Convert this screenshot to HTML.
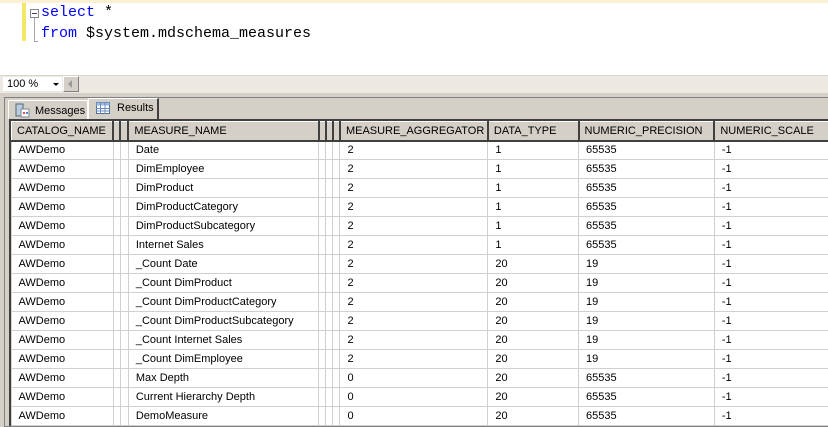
<!DOCTYPE html>
<html><head><meta charset="utf-8"><style>
*{margin:0;padding:0;box-sizing:border-box}
body{width:828px;height:424px;overflow:hidden;background:#d4d0c8;position:relative;font-family:"Liberation Sans",sans-serif}
.ed{position:absolute;left:0;top:0;width:828px;height:75px;background:#fff}
.ytop{position:absolute;left:0;top:0;width:828px;height:3px;background:#fcf1d6}
.ybar{position:absolute;left:22px;top:3px;width:4px;height:38px;background:#f4e66a}
.code{position:absolute;left:41px;font:15px "Liberation Mono",monospace;color:#000;white-space:pre}
.kw{color:#0000ff}
.fold{position:absolute;left:30px;top:9px;width:9px;height:9px;border:1px solid #888;background:#fff}
.fold:after{content:"";position:absolute;left:1px;top:3px;width:5px;height:1px;background:#444}
.fl{position:absolute;left:34px;top:18px;width:1px;height:24px;background:#aaa}
.fl2{position:absolute;left:34px;top:41px;width:4px;height:1px;background:#aaa}
.zb{position:absolute;left:0;top:75px;width:828px;height:18px;background:#ece9e2;border-top:1px solid #d8d5cc}
.zs{position:absolute;left:3px;top:77px;width:59px;height:14px;background:#fff;font-size:11px;padding-left:4px;line-height:14px}
.za{position:absolute;left:53px;top:83px;border:3px solid transparent;border-top:3px solid #000}
.zbtn{position:absolute;left:63px;top:76px;width:16px;height:16px;background:#d4d0c8;border:1px solid #fff;border-right-color:#808080;border-bottom-color:#808080}
.zbtn:after{content:"";position:absolute;left:4px;top:3px;border:4px solid transparent;border-right:4px solid #999;border-left:0}
.pane{position:absolute;left:4px;top:97px;width:830px;height:330px;border:1px solid #808080;border-right:0;background:#d4d0c8}
.tab{position:absolute;font-size:11px;height:19px;line-height:18px;background:#d4d0c8;border:1px solid #fff;border-bottom:0}
.grid{position:absolute;left:9px;top:119px;width:830px;border-left:2px solid #404040;border-top:2px solid #404040}
table{border-collapse:collapse;table-layout:fixed;font-size:11px}
th{height:19px;font-weight:normal;text-align:left;padding-left:5px;background:#d4d0c8;border-top:1px solid #fff;border-left:1px solid #fff;border-right:2px solid #404040;border-bottom:2px solid #404040;white-space:nowrap;overflow:hidden}
td{height:19px;background:#fff;border-right:1px solid #d0d0d0;border-bottom:1px solid #d0d0d0;padding-left:7px;white-space:nowrap;overflow:hidden}
td.s{background:#fff;padding:0}
</style></head><body>
<div class="ed"></div><div class="ytop"></div>
<div class="ybar"></div>
<div class="fold"></div><div class="fl"></div><div class="fl2"></div>
<div class="code" style="top:4px"><span class="kw">select</span> *</div>
<div class="code" style="top:25px"><span class="kw">from</span> $system.mdschema_measures</div>
<div class="zb"></div>
<div class="zs">100 %</div><div class="za"></div><div class="zbtn"></div>
<div class="pane"></div>
<div class="tab" style="left:8px;top:100px;width:80px;padding-left:26px;line-height:20px">Messages
<svg style="position:absolute;left:6px;top:2px" width="15" height="15"><rect x="1" y="1" width="7" height="12" fill="#bcd" stroke="#567"/><rect x="6" y="6" width="8" height="8" fill="#fff" stroke="#789"/><rect x="8" y="9" width="2" height="2" fill="#e44"/><rect x="11" y="9" width="2" height="2" fill="#48c"/></svg></div>
<div class="tab" style="left:88px;top:98px;width:71px;height:21px;padding-left:28px;border-right:2px solid #404040">Results
<svg style="position:absolute;left:7px;top:3px" width="14" height="12"><rect x="0.5" y="0.5" width="13" height="11" fill="#fff" stroke="#4a6fa5"/><rect x="0.5" y="0.5" width="13" height="3" fill="#9bb8e0"/><path d="M0 6.5H14M0 9H14M4.5 0V12M9 0V12" stroke="#6a8cc0"/></svg></div>
<div class="grid"><table>
<colgroup><col style="width:102px"><col style="width:7px"><col style="width:8px"><col style="width:191px"><col style="width:7px"><col style="width:7px"><col style="width:7px"><col style="width:148px"><col style="width:91px"><col style="width:136px"><col style="width:124px"></colgroup>
<tr><th>CATALOG_NAME</th><th></th><th></th><th>MEASURE_NAME</th><th></th><th></th><th></th><th>MEASURE_AGGREGATOR</th><th>DATA_TYPE</th><th>NUMERIC_PRECISION</th><th>NUMERIC_SCALE</th></tr>
<tr><td>AWDemo</td><td class="s"></td><td class="s"></td><td>Date</td><td class="s"></td><td class="s"></td><td class="s"></td><td>2</td><td>1</td><td>65535</td><td>-1</td></tr>
<tr><td>AWDemo</td><td class="s"></td><td class="s"></td><td>DimEmployee</td><td class="s"></td><td class="s"></td><td class="s"></td><td>2</td><td>1</td><td>65535</td><td>-1</td></tr>
<tr><td>AWDemo</td><td class="s"></td><td class="s"></td><td>DimProduct</td><td class="s"></td><td class="s"></td><td class="s"></td><td>2</td><td>1</td><td>65535</td><td>-1</td></tr>
<tr><td>AWDemo</td><td class="s"></td><td class="s"></td><td>DimProductCategory</td><td class="s"></td><td class="s"></td><td class="s"></td><td>2</td><td>1</td><td>65535</td><td>-1</td></tr>
<tr><td>AWDemo</td><td class="s"></td><td class="s"></td><td>DimProductSubcategory</td><td class="s"></td><td class="s"></td><td class="s"></td><td>2</td><td>1</td><td>65535</td><td>-1</td></tr>
<tr><td>AWDemo</td><td class="s"></td><td class="s"></td><td>Internet Sales</td><td class="s"></td><td class="s"></td><td class="s"></td><td>2</td><td>1</td><td>65535</td><td>-1</td></tr>
<tr><td>AWDemo</td><td class="s"></td><td class="s"></td><td>_Count Date</td><td class="s"></td><td class="s"></td><td class="s"></td><td>2</td><td>20</td><td>19</td><td>-1</td></tr>
<tr><td>AWDemo</td><td class="s"></td><td class="s"></td><td>_Count DimProduct</td><td class="s"></td><td class="s"></td><td class="s"></td><td>2</td><td>20</td><td>19</td><td>-1</td></tr>
<tr><td>AWDemo</td><td class="s"></td><td class="s"></td><td>_Count DimProductCategory</td><td class="s"></td><td class="s"></td><td class="s"></td><td>2</td><td>20</td><td>19</td><td>-1</td></tr>
<tr><td>AWDemo</td><td class="s"></td><td class="s"></td><td>_Count DimProductSubcategory</td><td class="s"></td><td class="s"></td><td class="s"></td><td>2</td><td>20</td><td>19</td><td>-1</td></tr>
<tr><td>AWDemo</td><td class="s"></td><td class="s"></td><td>_Count Internet Sales</td><td class="s"></td><td class="s"></td><td class="s"></td><td>2</td><td>20</td><td>19</td><td>-1</td></tr>
<tr><td>AWDemo</td><td class="s"></td><td class="s"></td><td>_Count DimEmployee</td><td class="s"></td><td class="s"></td><td class="s"></td><td>2</td><td>20</td><td>19</td><td>-1</td></tr>
<tr><td>AWDemo</td><td class="s"></td><td class="s"></td><td>Max Depth</td><td class="s"></td><td class="s"></td><td class="s"></td><td>0</td><td>20</td><td>65535</td><td>-1</td></tr>
<tr><td>AWDemo</td><td class="s"></td><td class="s"></td><td>Current Hierarchy Depth</td><td class="s"></td><td class="s"></td><td class="s"></td><td>0</td><td>20</td><td>65535</td><td>-1</td></tr>
<tr><td>AWDemo</td><td class="s"></td><td class="s"></td><td>DemoMeasure</td><td class="s"></td><td class="s"></td><td class="s"></td><td>0</td><td>20</td><td>65535</td><td>-1</td></tr>
</table></div>
</body></html>
